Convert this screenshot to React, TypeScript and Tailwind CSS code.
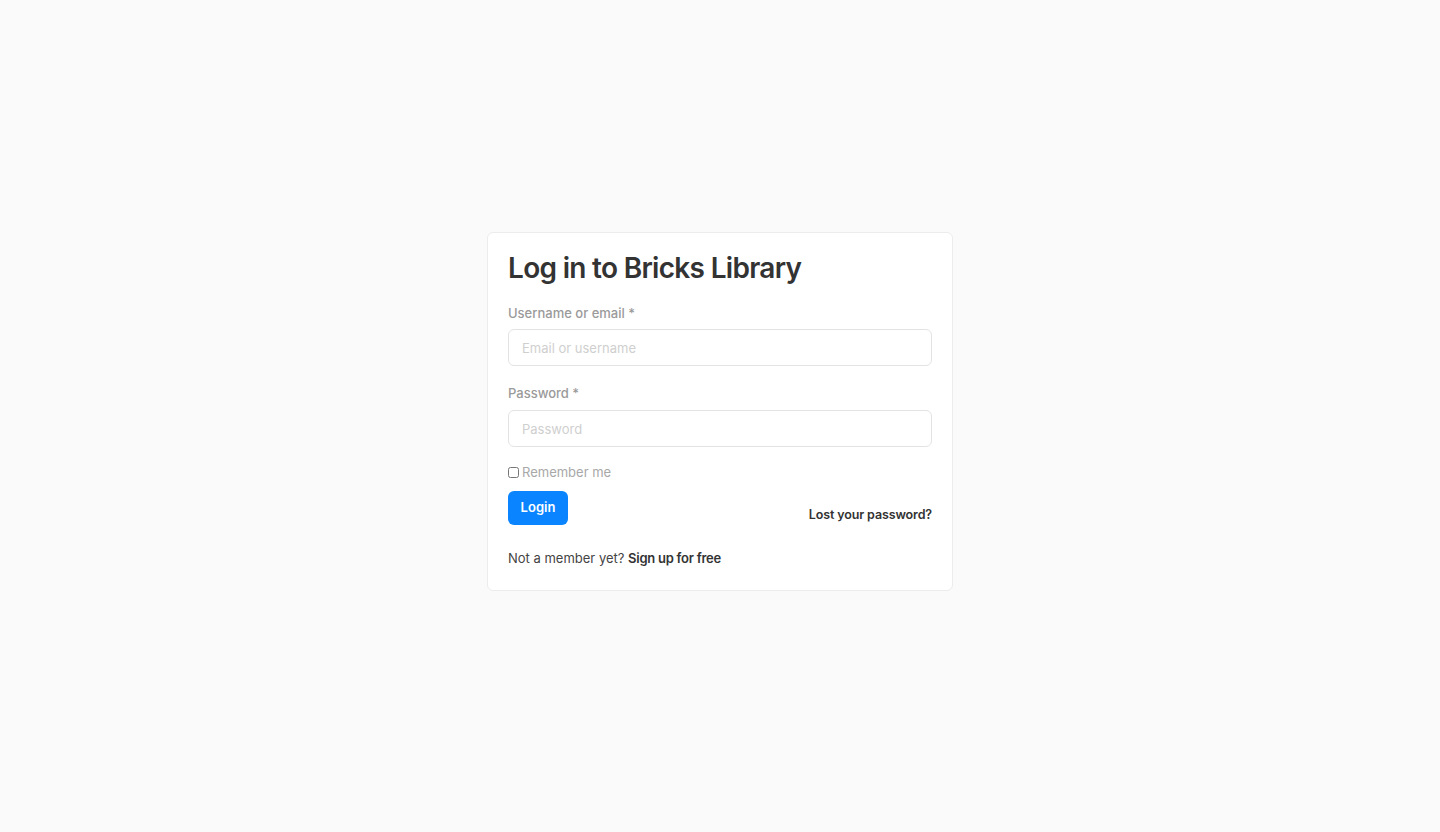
export default function App() {
  return (
    <div
      className="min-h-screen bg-[#fafafa] flex items-start justify-center pt-[232px]"
      style={{ fontFamily: 'Inter, "Noto Sans", sans-serif' }}
    >
      <div className="w-[466px] bg-white border border-[#ececec] rounded-[6px] px-5 pt-[18px] pb-6">
        <h1 className="text-[28px] leading-[34px] font-semibold text-[#333] tracking-[-0.025em]">
          Log in to Bricks Library
        </h1>

        <form className="mt-5" onSubmit={(e) => e.preventDefault()}>
          <label className="block text-[13px] leading-4 font-medium text-[#9a9a9a] mb-2">
            Username or email *
          </label>
          <input
            type="text"
            placeholder="Email or username"
            className="w-full h-[37px] px-[13px] text-[13px] border border-[#e3e3e3] rounded-[6px] outline-none placeholder:text-[#cfcfcf]"
          />

          <label className="block text-[13px] leading-4 font-medium text-[#9a9a9a] mt-[19px] mb-[9px]">
            Password *
          </label>
          <input
            type="password"
            placeholder="Password"
            className="w-full h-[37px] px-[13px] text-[13px] border border-[#e3e3e3] rounded-[6px] outline-none placeholder:text-[#cfcfcf]"
          />

          <label className="flex items-center mt-[17px] text-[13px] leading-4 text-[#a8a8a8]">
            <input type="checkbox" className="w-[11px] h-[11px] m-0 mr-[3px] accent-[#555]" />
            Remember me
          </label>

          <div className="flex items-end justify-between mt-[11px]">
            <button
              type="submit"
              className="h-[34px] w-[60px] rounded-[6px] bg-[#0a84ff] text-white text-[13px] font-semibold"
            >
              Login
            </button>
            <a href="#" className="text-[12.5px] leading-4 font-semibold text-[#333] tracking-[-0.01em] mb-[2px]">
              Lost your password?
            </a>
          </div>
        </form>

        <p className="mt-[25px] text-[13px] leading-4 text-[#444]">
          Not a member yet?{' '}
          <a href="#" className="font-semibold text-[#333] tracking-[-0.02em]">
            Sign up for free
          </a>
        </p>
      </div>
    </div>
  )
}
